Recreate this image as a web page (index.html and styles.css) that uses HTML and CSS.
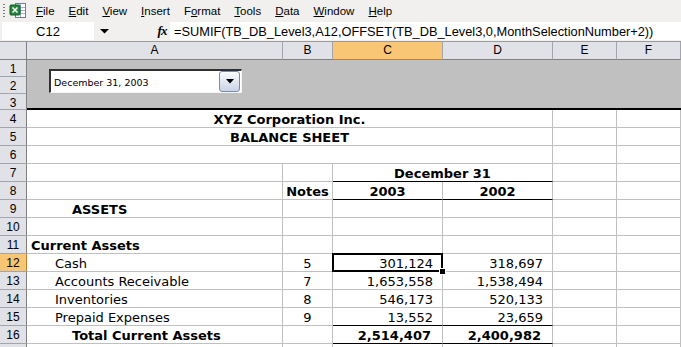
FILE: index.html
```html
<!DOCTYPE html>
<html>
<head>
<meta charset="utf-8">
<link rel="stylesheet" href="styles.css">
</head>
<body>
<div class="menubar">
  <span class="grip"></span>
  <svg class="xl" width="18" height="18" viewBox="0 0 18 18">
    <rect x="6.5" y="1.5" width="10" height="14" fill="#fff" stroke="#6b7d99"/>
    <path d="M7 5.5H16M7 8.5H16M7 11.5H16M11.5 2V15" stroke="#9fb0c8" stroke-width="1"/>
    <rect x="1" y="3" width="10" height="10" rx="1" fill="#21883b" stroke="#145a25"/>
    <path d="M3.5 5.5L8.5 10.5M8.5 5.5L3.5 10.5" stroke="#fff" stroke-width="1.6"/>
  </svg>
  <nav class="menu">
    <span class="mi"><u>F</u>ile</span>
    <span class="mi"><u>E</u>dit</span>
    <span class="mi"><u>V</u>iew</span>
    <span class="mi"><u>I</u>nsert</span>
    <span class="mi">F<u>o</u>rmat</span>
    <span class="mi"><u>T</u>ools</span>
    <span class="mi"><u>D</u>ata</span>
    <span class="mi"><u>W</u>indow</span>
    <span class="mi"><u>H</u>elp</span>
  </nav>
</div>
<div class="fbar">
  <div class="namebox">C12</div>
  <div class="nbdrop"><svg width="9" height="5" viewBox="0 0 9 5"><path d="M0 0H9L4.5 4.5Z" fill="#000"/></svg></div>
  <div class="fx">fx</div>
  <div class="formula">=SUMIF(TB_DB_Level3,A12,OFFSET(TB_DB_Level3,0,MonthSelectionNumber+2))</div>
</div>
<div class="sheet">
  <div class="corner"></div>
  <div class="ch">A</div><div class="ch">B</div><div class="ch on">C</div><div class="ch">D</div><div class="ch">E</div><div class="ch">F</div>

  <div class="rh">1</div><div class="g"></div><div class="g"></div><div class="g"></div><div class="g"></div><div class="g"></div><div class="g"></div>
  <div class="rh">2</div><div class="g"></div><div class="g"></div><div class="g"></div><div class="g"></div><div class="g"></div><div class="g"></div>
  <div class="rh">3</div><div class="g bt"></div><div class="g bt"></div><div class="g bt"></div><div class="g bt"></div><div class="g bt"></div><div class="g bt"></div>

  <div class="rh">4</div><div class="c s4 b ctr">XYZ Corporation Inc.</div><div class="c"></div><div class="c"></div>
  <div class="rh">5</div><div class="c s4 b ctr">BALANCE SHEET</div><div class="c"></div><div class="c"></div>
  <div class="rh">6</div><div class="c s4"></div><div class="c"></div><div class="c"></div>
  <div class="rh">7</div><div class="c"></div><div class="c"></div><div class="c s2 b ctr ul">December 31</div><div class="c"></div><div class="c"></div>
  <div class="rh">8</div><div class="c"></div><div class="c b ctr">Notes</div><div class="c b ctr ul">2003</div><div class="c b ctr ul">2002</div><div class="c"></div><div class="c"></div>
  <div class="rh">9</div><div class="c b ind2">ASSETS</div><div class="c"></div><div class="c"></div><div class="c"></div><div class="c"></div><div class="c"></div>
  <div class="rh">10</div><div class="c"></div><div class="c"></div><div class="c"></div><div class="c"></div><div class="c"></div><div class="c"></div>
  <div class="rh">11</div><div class="c b ind0">Current Assets</div><div class="c"></div><div class="c"></div><div class="c"></div><div class="c"></div><div class="c"></div>
  <div class="rh on">12</div><div class="c ind1">Cash</div><div class="c ctr">5</div><div class="c r sel">301,124</div><div class="c r">318,697</div><div class="c"></div><div class="c"></div>
  <div class="rh">13</div><div class="c ind1">Accounts Receivable</div><div class="c ctr">7</div><div class="c r">1,653,558</div><div class="c r">1,538,494</div><div class="c"></div><div class="c"></div>
  <div class="rh">14</div><div class="c ind1">Inventories</div><div class="c ctr">8</div><div class="c r">546,173</div><div class="c r">520,133</div><div class="c"></div><div class="c"></div>
  <div class="rh">15</div><div class="c ind1">Prepaid Expenses</div><div class="c ctr">9</div><div class="c r ul">13,552</div><div class="c r ul">23,659</div><div class="c"></div><div class="c"></div>
  <div class="rh">16</div><div class="c b ind2">Total Current Assets</div><div class="c"></div><div class="c b r rb ul">2,514,407</div><div class="c b r rb ul">2,400,982</div><div class="c"></div><div class="c"></div>
  <div class="rh"></div><div class="c"></div><div class="c"></div><div class="c"></div><div class="c"></div><div class="c"></div><div class="c"></div>

  <div class="combo">
    <span class="combo-text">December 31, 2003</span>
    <span class="combo-btn"><svg width="8" height="5" viewBox="0 0 8 5"><path d="M0 0H8L4 4.5Z" fill="#000"/></svg></span>
  </div>
</div>
</body>
</html>
```

FILE: styles.css
```css
html, body {
  margin: 0;
  padding: 0;
}
body {
  width: 681px;
  height: 347px;
  overflow: hidden;
  background: #ffffff;
  font-family: "Liberation Sans", Arial, sans-serif;
  color: #000;
}

/* menu bar */
.menubar {
  height: 21px;
  display: flex;
  align-items: center;
  background: #f1f0ee;
}
.grip {
  width: 2px;
  height: 14px;
  margin-left: 3px;
  background-image: linear-gradient(#7a7a7a 50%, transparent 50%);
  background-size: 2px 3px;
}
.xl {
  margin-left: 4px;
  display: block;
}
.menu {
  display: flex;
  margin-left: 2px;
}
.mi {
  padding: 2px 7px 0;
  font-size: 11.5px;
  line-height: 19px;
  white-space: nowrap;
}
.mi u {
  text-decoration-thickness: 1px;
  text-underline-offset: 1px;
}

/* formula bar */
.fbar {
  height: 21px;
  box-sizing: border-box;
  display: flex;
  background: #f1f0ee;
  border-bottom: 1px solid #9b9b9b;
}
.namebox {
  margin: 1px 0 1px 2px;
  width: 92px;
  background: #fff;
  font-size: 13px;
  line-height: 19px;
  text-align: center;
}
.nbdrop {
  width: 20px;
  display: flex;
  align-items: center;
  justify-content: center;
  padding-top: 1px;
}
.fx {
  margin-left: 40px;
  width: 16px;
  font-family: "Liberation Serif", serif;
  font-style: italic;
  font-weight: bold;
  font-size: 13px;
  line-height: 20px;
  text-align: center;
  letter-spacing: -1px;
}
.formula {
  flex: 1;
  margin: 1px 0;
  background: #fff;
  padding-left: 4px;
  font-size: 12.8px;
  line-height: 19px;
  white-space: nowrap;
  overflow: hidden;
}

/* sheet */
.sheet {
  position: relative;
  display: grid;
  grid-template-columns: 27px 256px 50px 110px 110px 64px 64px;
  grid-template-rows: 18px 17px 17px 16px repeat(14, 18px);
  font-family: "DejaVu Sans", Verdana, sans-serif;
  font-size: 13px;
}
.sheet > div {
  box-sizing: border-box;
  min-width: 0;
  white-space: nowrap;
}
.corner, .ch, .rh {
  background: #e1e1e8;
  font-family: "Liberation Sans", Arial, sans-serif;
  font-size: 12px;
  text-align: center;
}
.corner {
  border-right: 1px solid #808080;
  border-bottom: 1px solid #808080;
}
.ch {
  line-height: 17px;
  border-right: 1px solid #a4a4ac;
  border-bottom: 1px solid #808080;
}
.rh {
  line-height: 16px;
  padding-top: 1px;
  border-right: 1px solid #808080;
  border-bottom: 1px solid #a4a4ac;
}
.ch.on, .rh.on {
  background: #f8c674;
}
.ch.on {
  border-bottom-color: #c08030;
}
.rh.on {
  border-right-color: #c08030;
}

.g {
  background: #c0c0c0;
}
.g.bt {
  border-bottom: 2px solid #000;
}

.c {
  border-right: 1px solid #c0c0c0;
  border-bottom: 1px solid #c0c0c0;
  line-height: 17px;
  padding-top: 1px;
}
.s4 { grid-column: span 4; }
.s2 { grid-column: span 2; }
.b { font-weight: bold; }
.ctr { text-align: center; }
.r { text-align: right; padding-right: 9px; }
.r.rb { padding-right: 11px; }
.ind0 { padding-left: 4px; }
.ind1 { padding-left: 28px; }
.ind2 { padding-left: 45px; }
.c.ul { border-bottom-color: #000; }

.sel {
  position: relative;
}
.sel::before {
  content: "";
  position: absolute;
  left: -1px;
  top: -1px;
  right: -1px;
  bottom: -1px;
  border: 2px solid #000;
}
.sel::after {
  content: "";
  position: absolute;
  right: -4px;
  bottom: -4px;
  width: 7px;
  height: 7px;
  background: #000;
  border: 1px solid #fff;
  box-sizing: border-box;
}

/* floating combo box control */
.combo {
  position: absolute;
  left: 49px;
  top: 27px;
  width: 193px;
  height: 24px;
  box-sizing: border-box;
  background: #fff;
  border-top: 2px solid #303030;
  border-left: 2px solid #303030;
  border-right: 1px solid #f4f4f4;
  border-bottom: 1px solid #f4f4f4;
  display: flex;
  align-items: center;
  justify-content: space-between;
  font-family: "DejaVu Sans", Verdana, sans-serif;
  font-size: 9.5px;
}
.combo-text {
  padding-left: 3px;
  padding-top: 1px;
}
.combo-btn {
  width: 21px;
  height: 21px;
  margin-right: 1px;
  box-sizing: border-box;
  border: 1px solid #7b8aa6;
  border-radius: 3px;
  background: linear-gradient(#fbfbfd, #cbd3e6);
  display: flex;
  align-items: center;
  justify-content: center;
}
```
